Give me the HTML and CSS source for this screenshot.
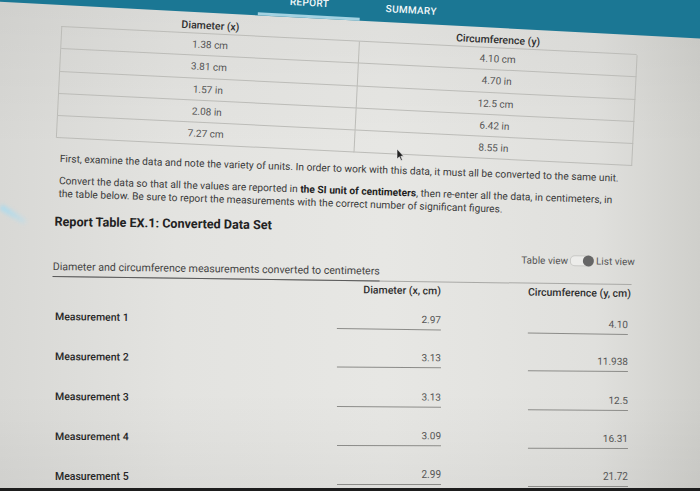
FILE: index.html
```html
<!DOCTYPE html>
<html lang="en">
<head>
<meta charset="utf-8">
<title>Report</title>
<link rel="stylesheet" href="styles.css">
</head>
<body>
<header class="topbar">
  <nav class="tabs">
    <span class="tab active">REPORT</span>
    <span class="tab">SUMMARY</span>
  </nav>
</header>

<section class="source">
  <div class="source-head">
    <span>Diameter (x)</span>
    <span>Circumference (y)</span>
  </div>
  <div class="source-grid">
    <span>1.38 cm</span><span>4.10 cm</span>
    <span>3.81 cm</span><span>4.70 in</span>
    <span>1.57 in</span><span>12.5 cm</span>
    <span>2.08 in</span><span>6.42 in</span>
    <span>7.27 cm</span><span>8.55 in</span>
  </div>
</section>

<section class="intro">
  <p>First, examine the data and note the variety of units. In order to work with this data, it must all be converted to the same unit.</p>
  <p>Convert the data so that all the values are reported in <b>the SI unit of centimeters</b>, then re-enter all the data, in centimeters, in<br>the table below. Be sure to report the measurements with the correct number of significant figures.</p>
  <h2>Report Table EX.1: Converted Data Set</h2>
</section>

<section class="converted">
  <div class="caption-row">
    <div class="caption">Diameter and circumference measurements converted to centimeters</div>
    <div class="view-toggle">
      <span>Table view</span>
      <span class="switch"></span>
      <span>List view</span>
    </div>
  </div>
  <div class="row row-head">
    <span></span>
    <span class="col-head">Diameter (x, cm)</span>
    <span class="col-head">Circumference (y, cm)</span>
  </div>
  <div class="rows">
    <div class="row"><span class="label">Measurement 1</span><span class="val diam">2.97</span><span class="val">4.10</span></div>
    <div class="row"><span class="label">Measurement 2</span><span class="val diam">3.13</span><span class="val">11.938</span></div>
    <div class="row"><span class="label">Measurement 3</span><span class="val diam">3.13</span><span class="val">12.5</span></div>
    <div class="row"><span class="label">Measurement 4</span><span class="val diam">3.09</span><span class="val">16.31</span></div>
    <div class="row"><span class="label">Measurement 5</span><span class="val diam">2.99</span><span class="val">21.72</span></div>
  </div>
</section>

<svg class="cursor" width="8" height="12" viewBox="0 0 8 12"><path d="M1 0 L1 10 L3.4 7.8 L5 11.5 L6.4 10.9 L4.8 7.3 L7.6 7.2 Z" fill="#222" stroke="#eee" stroke-width="0.6"/></svg>
<div class="glare"></div>
<div class="bezel"></div>
</body>
</html>
```

FILE: styles.css
```css
html, body {
  margin: 0;
  height: 491px;
  overflow: hidden;
}

body {
  font-family: Roboto, "Liberation Sans", sans-serif;
  color: #333;
  background:
    linear-gradient(180deg, rgba(0,0,0,0.04) 0%, rgba(0,0,0,0) 30%, rgba(0,0,0,0) 80%, rgba(0,0,0,0.04) 100%),
    linear-gradient(90deg, #d8d8d5 0%, #e3e3e0 25%, #e7e7e4 55%, #e0e0dd 85%, #cfcfcb 100%);
}

/* top navigation bar */
.topbar {
  height: 50px;
  margin: -45px -30px 0;
  padding-left: 288px;
  box-sizing: border-box;
  background: #1b7794;
  display: flex;
  align-items: flex-end;
  transform: rotate(3deg);
  transform-origin: 90px 100%;
}

.tabs {
  display: flex;
}

.tab {
  width: 102px;
  height: 28px;
  box-sizing: border-box;
  display: flex;
  align-items: center;
  justify-content: center;
  font-size: 10px;
  font-weight: 500;
  letter-spacing: 0.3px;
  color: #f2f7f9;
}

.tab.active {
  border-bottom: 3px solid #a3d2e1;
}

/* original data table */
.source {
  margin: 7px 0 0 62px;
  width: 576px;
  transform: rotate(2.8deg);
  transform-origin: 0 0;
}

.source-head {
  display: grid;
  grid-template-columns: 298px 278px;
  height: 14px;
  line-height: 14px;
  font-size: 10.5px;
  font-weight: 500;
  text-align: center;
  color: #2e2e2e;
}

.source-grid {
  display: grid;
  grid-template-columns: 298px 278px;
  border-top: 1px solid #bcbcb8;
  border-left: 1px solid #bcbcb8;
}

.source-grid span {
  height: 22.3px;
  line-height: 21px;
  box-sizing: border-box;
  border-right: 1px solid #bcbcb8;
  border-bottom: 1px solid #bcbcb8;
  text-align: center;
  font-size: 10px;
  color: #555;
}

/* instructions */
.intro {
  margin: 14px 0 0 60px;
  width: 630px;
  font-size: 10.2px;
  line-height: 13px;
  color: #3a3a3a;
  transform: rotate(2deg);
  transform-origin: 0 0;
}

.intro p {
  margin: 0;
  white-space: nowrap;
}

.intro p + p {
  margin-top: 9px;
}

.intro b {
  color: #222;
}

.intro h2 {
  margin: 14px 0 0 -3px;
  font-size: 12.6px;
  line-height: 16px;
  font-weight: 700;
  color: #222;
  transform: rotate(-1.1deg);
  transform-origin: 0 50%;
}

/* converted data */
.converted {
  margin: 17px 0 0 53px;
  width: 579px;
}

.caption-row {
  display: flex;
  justify-content: space-between;
  align-items: flex-start;
  border-bottom: 1px solid #a9a9a6;
  transform: rotate(0.8deg);
  transform-origin: 0 0;
}

.caption {
  padding: 13px 0 2.5px;
  margin-bottom: -1px;
  line-height: 13px;
  font-size: 10.6px;
  color: #444;
  border-bottom: 1px solid #5a5a5a;
}

.view-toggle {
  display: flex;
  align-items: center;
  gap: 2px;
  height: 12px;
  margin-right: -3px;
  font-size: 10px;
  color: #555;
}

.switch {
  position: relative;
  width: 22px;
  height: 9px;
  border-radius: 5px;
  background: #ececea;
  border: 1px solid #c8c8c5;
}

.switch::after {
  content: "";
  position: absolute;
  right: -1px;
  top: -1px;
  width: 11px;
  height: 11px;
  border-radius: 50%;
  background: #666;
}

.row {
  display: grid;
  grid-template-columns: 1fr 104px 100px;
  column-gap: 87px;
  align-items: start;
  width: 573px;
  margin-left: 2px;
  transform-origin: 0 50%;
}

.row-head {
  margin-top: 2.5px;
  transform: rotate(0.8deg);
}

.col-head {
  font-size: 10.5px;
  font-weight: 500;
  line-height: 13px;
  text-align: right;
  color: #2e2e2e;
  white-space: nowrap;
}

.rows {
  display: flex;
  flex-direction: column;
  gap: 23px;
  margin-top: 18px;
}

.rows .row:nth-child(1) { transform: rotate(0.8deg); }
.rows .row:nth-child(2) { transform: rotate(0.5deg); }
.rows .row:nth-child(3) { transform: rotate(0.4deg); }
.rows .row:nth-child(4) { transform: rotate(0.2deg); }
.rows .row:nth-child(5) { transform: rotate(0deg); }

.label {
  font-size: 10.5px;
  font-weight: 500;
  line-height: 13px;
  color: #262626;
}

.val {
  font-size: 10px;
  line-height: 13px;
  text-align: right;
  color: #555;
  padding-bottom: 3px;
  border-bottom: 1px solid #8c8c89;
}

.val.diam {
  margin-top: -2px;
}

/* overlays from the photo */
.cursor {
  position: absolute;
  left: 396px;
  top: 149px;
}

.glare {
  position: absolute;
  left: -2px;
  top: 212px;
  width: 30px;
  height: 5px;
  border-radius: 3px;
  background: linear-gradient(90deg, rgba(140,220,255,0.7), rgba(160,225,255,0.25));
  filter: blur(2px);
  transform: rotate(32deg);
}

.bezel {
  position: fixed;
  left: 0;
  right: 0;
  bottom: 0;
  height: 3px;
  background: #1d1d1d;
}
```
